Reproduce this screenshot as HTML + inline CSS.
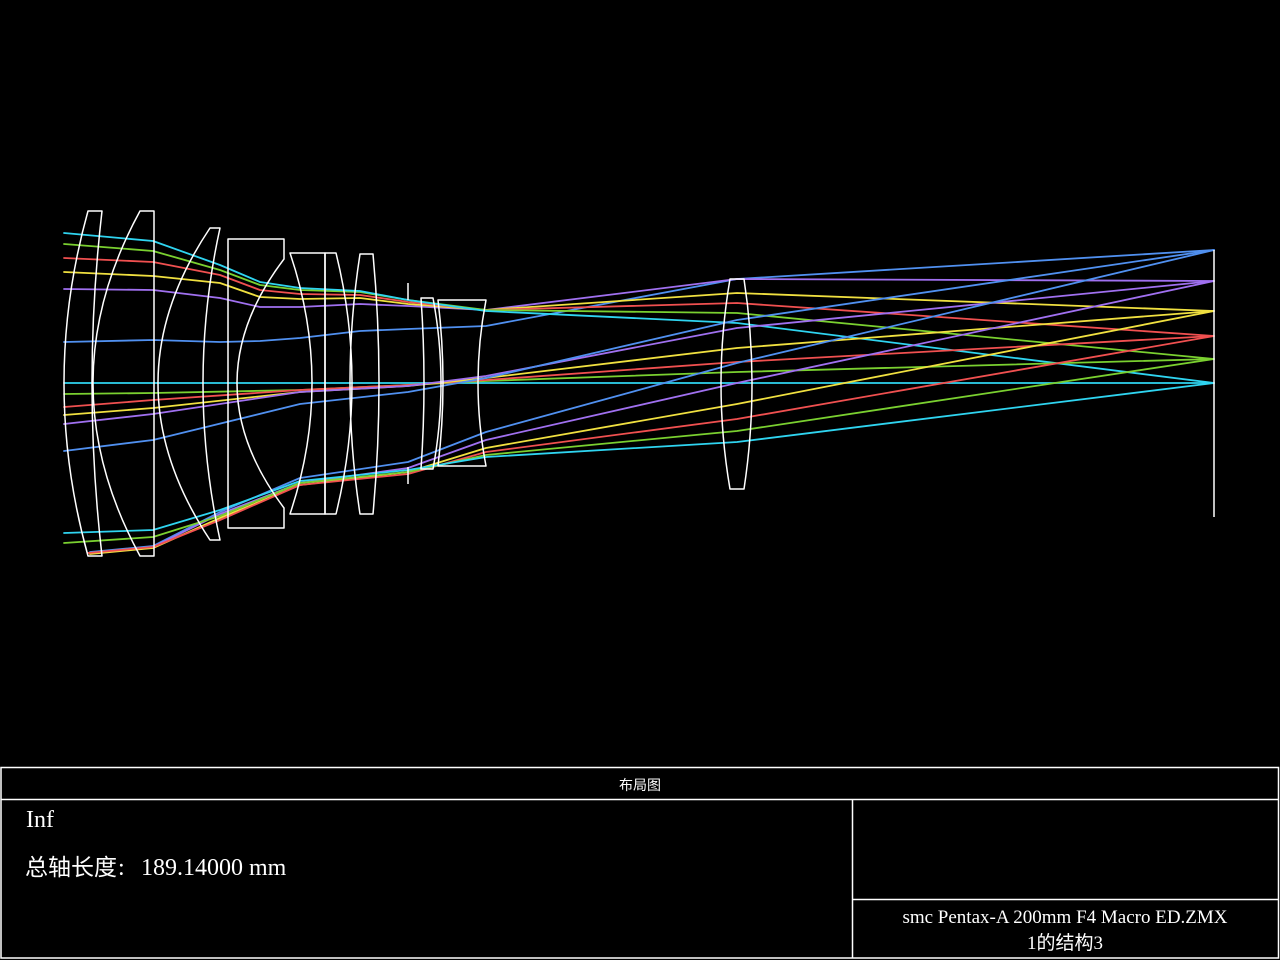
<!DOCTYPE html>
<html><head><meta charset="utf-8"><style>
html,body{margin:0;padding:0;background:#000;width:1280px;height:960px;overflow:hidden}
svg{display:block}
</style></head><body>
<svg width="1280" height="960" viewBox="0 0 1280 960" xmlns="http://www.w3.org/2000/svg">
<rect width="1280" height="960" fill="#000"/>
<g fill="none" stroke-width="1.8" stroke-linejoin="round" stroke-linecap="round">
<polyline stroke="#5090f0" points="64,342 153,340 220,342 260,341 300,338 360,331 408,329 486,326 737,279 1214,250"/>
<polyline stroke="#a070f0" points="64,289 153,290 220,298 260,307 300,307 360,304 408,306 486,310 737,279 1214,281"/>
<polyline stroke="#f0e040" points="64,272 153,276 220,283 260,297 300,299 360,298 408,304 486,310 737,293 1214,311"/>
<polyline stroke="#f05050" points="64,258 153,262 220,275 260,290 300,294 360,295 408,302 486,310 737,303 1214,336"/>
<polyline stroke="#7ad030" points="64,244 153,251 220,270 260,285 300,290 360,292 408,300 486,310 737,313 1214,359"/>
<polyline stroke="#2fd4f0" points="64,233 153,241 220,265 260,282 300,288 360,291 408,300 486,311 737,323 1214,383"/>
<line stroke="#2fd4f0" x1="64" y1="383" x2="1214" y2="383"/>
<polyline stroke="#7ad030" points="64,394 153,393 300,390 408,385 486,381 737,372 1214,359"/>
<polyline stroke="#f05050" points="64,407 153,400 300,390 408,385 486,380 737,362 1214,336"/>
<polyline stroke="#f0e040" points="64,415 153,408 300,392 408,386 486,378 737,348 1214,311"/>
<polyline stroke="#a070f0" points="64,424 153,414 300,392 408,386 486,376 737,328 1214,281"/>
<polyline stroke="#5090f0" points="64,451 153,440 300,404 408,392 486,378 737,320 1214,250"/>
<polyline stroke="#5090f0" points="90,552 153,546 220,512 300,478 408,462 486,432 737,363 1214,250"/>
<polyline stroke="#a070f0" points="90,553 153,547 220,514 300,483 408,468 486,440 737,383 1214,281"/>
<polyline stroke="#f0e040" points="90,554 153,548 220,518 300,485 408,472 486,448 737,404 1214,311"/>
<polyline stroke="#f05050" points="88,553 153,547 220,520 300,485 408,474 486,452 737,419 1214,336"/>
<polyline stroke="#7ad030" points="64,543 153,537 220,516 300,483 408,472 486,455 737,431 1214,359"/>
<polyline stroke="#2fd4f0" points="64,533 153,530 220,510 300,481 408,470 486,457 737,442 1214,383"/>
</g>
<g fill="none" stroke="#fff" stroke-width="1.5" stroke-linejoin="round">
<path d="M88,211 L102,211 Q82,383 102,556 L88,556 Q40,383 88,211 Z"/>
<path d="M140,211 L154,211 L154,556 L140,556 Q46,383 140,211 Z"/>
<path d="M210,228 L220,228 Q186,383 220,540 L210,540 Q106,383 210,228 Z"/>
<path d="M228,239 L284,239 L284,259 Q190,383 284,508 L284,528 L228,528 Z"/>
<path d="M290,253 L325,253 L325,514 L290,514 Q334,383 290,253 Z"/>
<path d="M325,253 L336,253 Q368,383 336,514 L325,514 Z"/>
<path d="M360,254 L373,254 Q385,383 373,514 L360,514 Q340,383 360,254 Z"/>
<path d="M408,283 L408,300 M408,467 L408,484"/>
<path d="M421,298 L433,298 Q449,383 433,469 L421,469 Q427,383 421,298 Z"/>
<path d="M438,300 L486,300 Q470,383 486,466 L438,466 Q448,383 438,300 Z"/>
<path d="M730,279 L744,279 Q760,384 744,489 L730,489 Q712,384 730,279 Z"/>
<line x1="1214" y1="250" x2="1214" y2="517"/>
</g>
<g stroke="#fff" stroke-width="1.5" fill="none">
<rect x="1" y="767.5" width="1277.5" height="190.5"/>
<line x1="1" y1="799.5" x2="1279" y2="799.5"/>
<line x1="852.5" y1="799" x2="852.5" y2="958"/>
<line x1="852" y1="899.5" x2="1279" y2="899.5"/>
</g>
<g fill="#fff">
<text x="640" y="790" font-family="'Liberation Sans','Noto Sans CJK SC',sans-serif" font-size="14" text-anchor="middle">布局图</text>
<text x="26" y="827" font-family="'Liberation Serif','Noto Serif CJK SC',serif" font-size="24">Inf</text>
<text x="25" y="875" font-family="'Noto Sans CJK SC',sans-serif" font-size="23">总轴长度</text>
<text x="118" y="875" font-family="'Liberation Serif',serif" font-size="24">:</text>
<text x="141" y="875" font-family="'Liberation Serif',serif" font-size="24">189.14000 mm</text>
<text x="1065" y="923" font-family="'Liberation Serif','Noto Sans CJK SC',serif" font-size="19" text-anchor="middle">smc Pentax-A 200mm F4 Macro ED.ZMX</text>
<text x="1065" y="949" font-family="'Liberation Serif','Noto Sans CJK SC',serif" font-size="19" text-anchor="middle">1的结构3</text>
</g>
</svg>
</body></html>
